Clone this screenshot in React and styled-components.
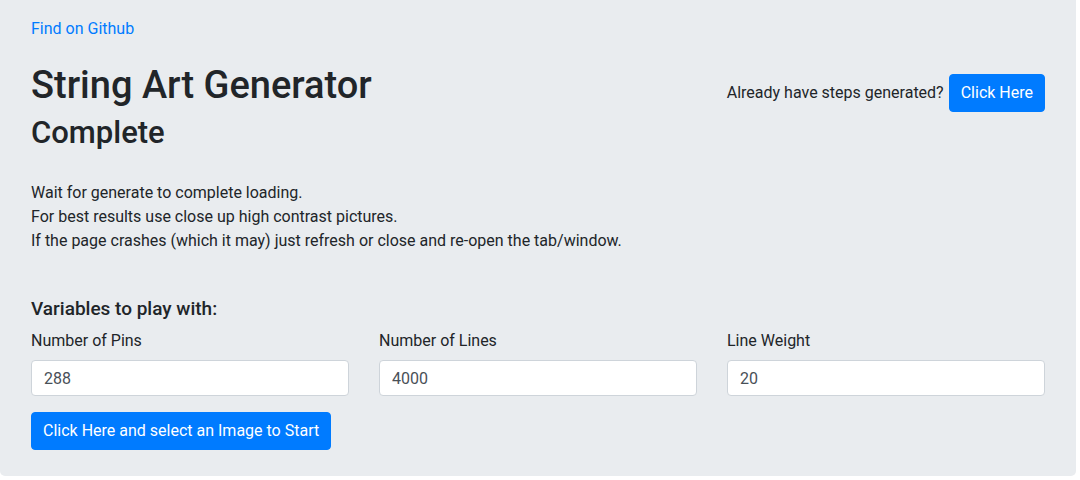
import React from "react";
import styled, { createGlobalStyle } from "styled-components";

const GlobalStyle = createGlobalStyle`
  html, body { margin: 0; padding: 0; background: #ffffff; }
  body {
    font-family: Roboto, "Liberation Sans", Arial, sans-serif;
    font-size: 16px;
    line-height: 1.5;
    color: #212529;
  }
  * { box-sizing: border-box; }
`;

const Jumbotron = styled.main`
  width: 1076px;
  background: #e9ecef;
  border-radius: 0 0 5px 5px;
  padding: 17px 31px 26px;
`;

const GithubLink = styled.a`
  display: block;
  color: #007bff;
  text-decoration: none;
  line-height: 24px;
  width: max-content;
`;

const Header = styled.header`
  display: flex;
  justify-content: space-between;
  align-items: flex-start;
  margin-top: 20px;
`;

const TitleBlock = styled.div`
  display: flex;
  flex-direction: column;
`;

const Title = styled.h1`
  margin: 0 0 5px;
  font-size: 38px;
  line-height: 48px;
  font-weight: 500;
`;

const Status = styled.h2`
  margin: 0;
  font-size: 31px;
  line-height: 38px;
  font-weight: 500;
`;

const Aside = styled.div`
  display: flex;
  align-items: center;
  gap: 5px;
  margin-top: 13px;
`;

const AsideText = styled.span`
  font-size: 16px;
  line-height: 24px;
`;

const Button = styled.button`
  background: #007bff;
  color: #ffffff;
  border: 1px solid #007bff;
  border-radius: 4px;
  font-family: inherit;
  font-size: 16px;
  line-height: 24px;
  padding: 6px 11px;
  cursor: pointer;
  margin-top: ${(p) => p.$mt || 0}px;
`;

const Intro = styled.div`
  margin-top: 29px;
  line-height: 24px;
`;

const Line = styled.div``;

const SectionHeading = styled.h5`
  margin: 44px 0 0;
  font-size: 19px;
  line-height: 24px;
  font-weight: 500;
`;

const FieldGrid = styled.div`
  display: grid;
  grid-template-columns: repeat(3, 318px);
  column-gap: 30px;
  margin-top: 8px;
`;

const Field = styled.label`
  display: flex;
  flex-direction: column;
  gap: 7px;
`;

const FieldLabel = styled.span`
  line-height: 24px;
`;

const Input = styled.input`
  height: 36px;
  width: 100%;
  border: 1px solid #ced4da;
  border-radius: 4px;
  background: #ffffff;
  padding: 0 12px;
  font-family: inherit;
  font-size: 16px;
  color: #495057;
`;

const fields = [
  { label: "Number of Pins", value: "288" },
  { label: "Number of Lines", value: "4000" },
  { label: "Line Weight", value: "20" },
];

export default function App() {
  return (
    <>
      <GlobalStyle />
      <Jumbotron>
        <GithubLink href="#">Find on Github</GithubLink>
        <Header>
          <TitleBlock>
            <Title>String Art Generator</Title>
            <Status>Complete</Status>
          </TitleBlock>
          <Aside>
            <AsideText>Already have steps generated?</AsideText>
            <Button>Click Here</Button>
          </Aside>
        </Header>
        <Intro>
          <Line>Wait for generate to complete loading.</Line>
          <Line>For best results use close up high contrast pictures.</Line>
          <Line>
            If the page crashes (which it may) just refresh or close and
            re-open the tab/window.
          </Line>
        </Intro>
        <SectionHeading>Variables to play with:</SectionHeading>
        <FieldGrid>
          {fields.map((f) => (
            <Field key={f.label}>
              <FieldLabel>{f.label}</FieldLabel>
              <Input defaultValue={f.value} />
            </Field>
          ))}
        </FieldGrid>
        <Button $mt={16}>Click Here and select an Image to Start</Button>
      </Jumbotron>
    </>
  );
}
